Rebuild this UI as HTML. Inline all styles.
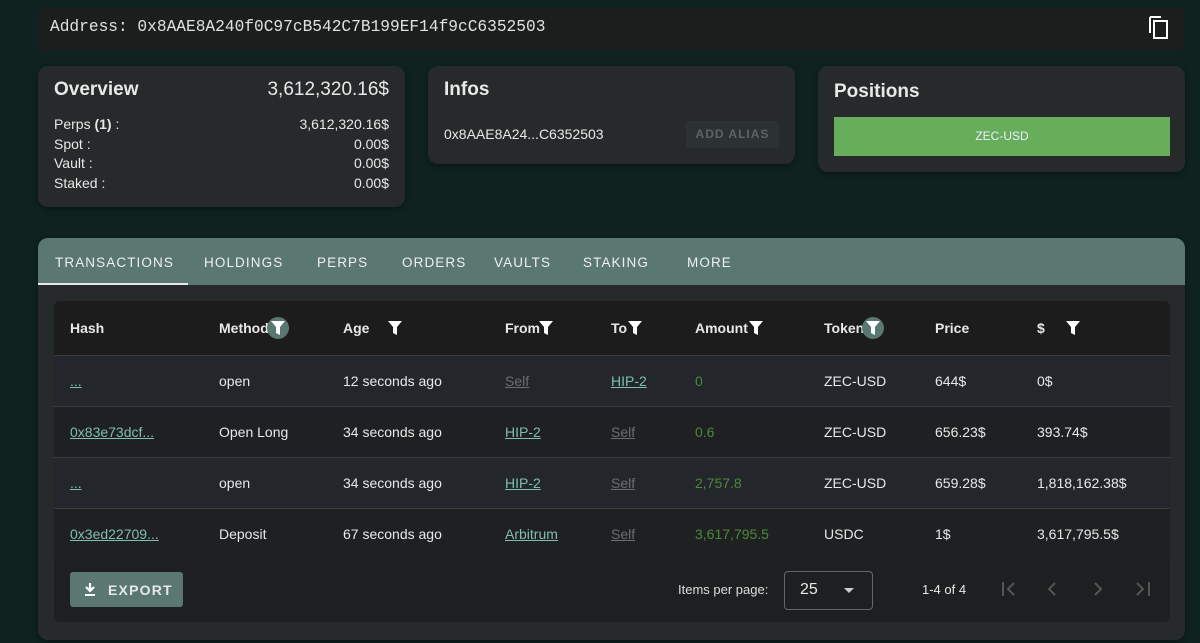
<!DOCTYPE html><html><head><style>
*{margin:0;padding:0;box-sizing:border-box}
body{width:1200px;height:643px;background:#0f2220;font-family:"Liberation Sans",sans-serif;color:#e8e8e8;position:relative;overflow:hidden}
.abs{position:absolute}
.card{position:absolute;background:#262a2a;border-radius:10px;box-shadow:0 2px 6px rgba(0,0,0,.4)}
.t{position:absolute;white-space:nowrap}
a{color:#7fbfad;text-decoration:underline}
.row{position:absolute;left:0;width:1116px;height:51px;border-top:1px solid #3a3d40}
.row .t{top:17px;font-size:14px}
.h .t{top:19px;font-size:14px;font-weight:bold}
.tab{position:absolute;top:17px;font-size:13.5px;letter-spacing:1.1px;color:#f0f0f0}
.self{color:#6a6e6e}
.amt{color:#4a8a3a}
</style></head><body>
<div class="abs" style="left:38px;top:8px;width:1147px;height:42px;background:#1c1e1e;border-radius:4px"></div>
<div class="t" style="left:50px;top:18px;font-family:'Liberation Mono',monospace;font-size:16.2px;color:#e0e0e0">Address: 0x8AAE8A240f0C97cB542C7B199EF14f9cC6352503</div>
<svg class="abs" style="left:1148px;top:16px" width="22" height="24" viewBox="0 0 22 24"><path d="M2 1H13M2 1V17" stroke="#fff" stroke-width="2" fill="none"/><rect x="6" y="5" width="13" height="17" stroke="#fff" stroke-width="2" fill="none"/></svg>

<div class="card" style="left:38px;top:66px;width:367px;height:141px">
<div class="t" style="left:16px;top:13px;font-size:19px;font-weight:bold">Overview</div>
<div class="t" style="right:16px;top:13px;font-size:19px">3,612,320.16$</div>
<div class="t" style="left:16px;top:49px;font-size:14px;line-height:19.5px">Perps <b>(1)</b> :<br>Spot :<br>Vault :<br>Staked :</div>
<div class="t" style="right:16px;top:49px;font-size:14px;line-height:19.5px;text-align:right">3,612,320.16$<br>0.00$<br>0.00$<br>0.00$</div>
</div>
<div class="card" style="left:428px;top:66px;width:367px;height:98px">
<div class="t" style="left:16px;top:13px;font-size:19px;font-weight:bold">Infos</div>
<div class="t" style="left:16px;top:60px;font-size:14px">0x8AAE8A24...C6352503</div>
<div class="abs" style="left:258px;top:55px;width:93px;height:27px;background:#2c3131;border-radius:3px;color:#5e6464;font-size:12px;letter-spacing:1px;text-align:center;line-height:27px;font-weight:bold">ADD ALIAS</div>
</div>
<div class="card" style="left:818px;top:66px;width:367px;height:106px">
<div class="t" style="left:16px;top:15px;font-size:19px;font-weight:bold">Positions</div>
<div class="abs" style="left:16px;top:51px;width:336px;height:39px;background:#67ae5b;font-size:12px;color:#eef;text-align:center;line-height:39px">ZEC-USD</div>
</div>

<div class="card" style="left:38px;top:238px;width:1147px;height:402px;overflow:hidden">
<div class="abs" style="left:0;top:0;width:1147px;height:47px;background:#5b7771"></div>
<div class="abs" style="left:0;top:45px;width:150px;height:2px;background:#e8e8e8"></div>
<div class="tab" style="left:17px">TRANSACTIONS</div>
<div class="tab" style="left:166px">HOLDINGS</div>
<div class="tab" style="left:279px">PERPS</div>
<div class="tab" style="left:364px">ORDERS</div>
<div class="tab" style="left:456px">VAULTS</div>
<div class="tab" style="left:545px">STAKING</div>
<div class="tab" style="left:649px">MORE</div>
<div class="abs" style="left:16px;top:63px;width:1116px;height:321px;background:#1e1f20;border-radius:6px;overflow:hidden">
<div class="abs h" style="left:0;top:0;width:1116px;height:54px;background:#1c1c1d">
<div class="t" style="left:16px">Hash</div>
<div class="t" style="left:165px">Method</div>
<div class="abs" style="left:213px;top:16px;width:22px;height:22px;border-radius:11px;background:#5b7771"></div>
<div class="t" style="left:289px">Age</div>
<div class="t" style="left:451px">From</div>
<div class="t" style="left:557px">To</div>
<div class="t" style="left:641px">Amount</div>
<div class="t" style="left:770px">Token</div>
<div class="abs" style="left:808px;top:16px;width:22px;height:22px;border-radius:11px;background:#5b7771"></div>
<div class="t" style="left:881px">Price</div>
<div class="t" style="left:983px">$</div>
<svg class="abs" style="left:0;top:0" width="1116" height="54"><g fill="#fff">
<path id="f" d="M0 0H14L9 6V14L5 12V6Z" transform="translate(217,20)"/>
<use href="#f" x="117"/><use href="#f" x="268"/><use href="#f" x="357"/><use href="#f" x="478"/><use href="#f" x="595"/><use href="#f" x="795"/></g></svg>
</div>
<div class="row" style="top:54px;background:#23262b"><div class="t" style="left:16px"><a>...</a></div><div class="t" style="left:165px">open</div><div class="t" style="left:289px">12 seconds ago</div><div class="t" style="left:451px"><a class="self">Self</a></div><div class="t" style="left:557px"><a>HIP-2</a></div><div class="t amt" style="left:641px">0</div><div class="t" style="left:770px">ZEC-USD</div><div class="t" style="left:881px">644$</div><div class="t" style="left:983px">0$</div></div>
<div class="row" style="top:105px;background:#1f2022"><div class="t" style="left:16px"><a>0x83e73dcf...</a></div><div class="t" style="left:165px">Open Long</div><div class="t" style="left:289px">34 seconds ago</div><div class="t" style="left:451px"><a>HIP-2</a></div><div class="t" style="left:557px"><a class="self">Self</a></div><div class="t amt" style="left:641px">0.6</div><div class="t" style="left:770px">ZEC-USD</div><div class="t" style="left:881px">656.23$</div><div class="t" style="left:983px">393.74$</div></div>
<div class="row" style="top:156px;background:#23262b"><div class="t" style="left:16px"><a>...</a></div><div class="t" style="left:165px">open</div><div class="t" style="left:289px">34 seconds ago</div><div class="t" style="left:451px"><a>HIP-2</a></div><div class="t" style="left:557px"><a class="self">Self</a></div><div class="t amt" style="left:641px">2,757.8</div><div class="t" style="left:770px">ZEC-USD</div><div class="t" style="left:881px">659.28$</div><div class="t" style="left:983px">1,818,162.38$</div></div>
<div class="row" style="top:207px;background:#1f2022"><div class="t" style="left:16px"><a>0x3ed22709...</a></div><div class="t" style="left:165px">Deposit</div><div class="t" style="left:289px">67 seconds ago</div><div class="t" style="left:451px"><a>Arbitrum</a></div><div class="t" style="left:557px"><a class="self">Self</a></div><div class="t amt" style="left:641px">3,617,795.5</div><div class="t" style="left:770px">USDC</div><div class="t" style="left:881px">1$</div><div class="t" style="left:983px">3,617,795.5$</div></div>
<div class="abs" style="left:16px;top:271px;width:113px;height:35px;background:#5b7771;border-radius:3px"></div>
<svg class="abs" style="left:30px;top:282px" width="12" height="14"><path d="M6 0V8M2 4L6 8L10 4" stroke="#fff" stroke-width="2.2" fill="none"/><path d="M1 12H11" stroke="#fff" stroke-width="2"/></svg>
<div class="t" style="left:54px;top:281px;font-size:14px;font-weight:bold;letter-spacing:1.2px">EXPORT</div>
<div class="t" style="left:624px;top:281px;font-size:13px;color:#ddd">Items per page:</div>
<div class="abs" style="left:730px;top:270px;width:89px;height:39px;border:1px solid #666;border-radius:4px"></div>
<div class="t" style="left:746px;top:280px;font-size:16px">25</div>
<div class="abs" style="left:790px;top:287px;border:5px solid transparent;border-top-color:#ccc;border-bottom:0"></div>
<div class="t" style="left:868px;top:281px;font-size:13px">1-4 of 4</div>
<svg class="abs" style="left:940px;top:280px" width="160" height="16" fill="none" stroke="#555" stroke-width="2">
<path d="M9 1V15M20 2L14 8L20 14"/>
<path d="M61 2L55 8L61 14"/>
<path d="M101 2L107 8L101 14"/>
<path d="M143 2L149 8L143 14M155 1V15"/></svg>
</div>
</div>
</body></html>
